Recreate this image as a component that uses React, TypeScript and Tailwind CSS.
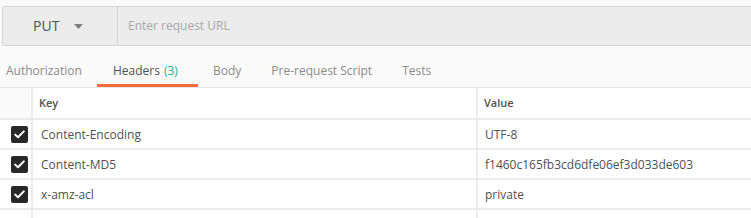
import React from "react";

const rows = [
  { key: "Content-Encoding", value: "UTF-8" },
  { key: "Content-MD5", value: "f1460c165fb3cd6dfe06ef3d033de603" },
  { key: "x-amz-acl", value: "private" },
];

function Check() {
  return (
    <div className="w-[17px] h-[17px] rounded-[2px] bg-[#282828] flex items-center justify-center">
      <svg width="11" height="9" viewBox="0 0 11 9" fill="none">
        <path d="M1.2 4.6 L4 7.3 L9.8 1.4" stroke="#fff" strokeWidth="2" strokeLinecap="round" strokeLinejoin="round" />
      </svg>
    </div>
  );
}

export default function App() {
  return (
    <div className="w-[751px] h-[218px] overflow-hidden bg-[#fafafa] text-[#505050]" style={{ fontFamily: '"Open Sans", sans-serif' }}>
      <div className="pt-[6px] pl-[2px]">
        <div className="flex h-[40px] w-[780px] bg-[#ececec] border border-[#d4d4d4] rounded-[3px]">
          <div className="w-[115px] flex items-center border-r border-[#d4d4d4] pl-[30px]">
            <span className="text-[14px] text-[#505050] leading-none">PUT</span>
            <svg className="ml-[15px]" width="9" height="5" viewBox="0 0 9 5">
              <path d="M0 0 L9 0 L4.5 5 Z" fill="#808080" />
            </svg>
          </div>
          <div className="flex items-center pl-[10px] text-[12px] text-[#a8a8a8]">Enter request URL</div>
        </div>
      </div>
      <div className="flex h-[42px] border-b border-[#e6e6e6] text-[12px]">
        <div className="pl-[6px] w-[97px] h-full flex items-center pt-[9px] text-[#8a8a8a]">Authorization</div>
        <div className="w-[101px] h-full flex items-center pl-[16px] border-b-[3px] border-[#f26b3a] pt-[11px] text-[#505050]">
          Headers<span className="ml-[4px] text-[#26b47f]">(3)</span>
        </div>
        <div className="ml-[15px] h-full flex items-center pt-[9px] text-[#8a8a8a]">Body</div>
        <div className="ml-[30px] h-full flex items-center pt-[9px] text-[#8a8a8a]">Pre-request Script</div>
        <div className="ml-[30px] h-full flex items-center pt-[9px] text-[#8a8a8a]">Tests</div>
      </div>
      <div className="bg-white">
        <div className="flex h-[32px] border-b-2 border-[#ebebeb]">
          <div className="w-[33px] border-r-2 border-[#ebebeb] bg-[#fafafa]" />
          <div className="w-[445px] border-r-2 border-[#ebebeb] flex items-center pl-[6px] text-[11px] font-semibold text-[#505050]">Key</div>
          <div className="flex-1 flex items-center pl-[6px] text-[11px] font-semibold text-[#505050]">Value</div>
        </div>
        {rows.map((r) => (
          <div key={r.key} className="flex h-[30px] border-b-2 border-[#ebebeb]">
            <div className="w-[33px] border-r-2 border-[#ebebeb] flex items-center pl-[11px]">
              <Check />
            </div>
            <div className="w-[445px] border-r-2 border-[#ebebeb] flex items-center pl-[8px] pt-[1px] text-[12px]">{r.key}</div>
            <div className="flex-1 flex items-center pl-[7px] pt-[1px] text-[12px]">{r.value}</div>
          </div>
        ))}
        <div className="flex h-[30px]">
          <div className="w-[33px] border-r-2 border-[#ebebeb]" />
          <div className="w-[445px] border-r-2 border-[#ebebeb]" />
          <div className="flex-1" />
        </div>
      </div>
    </div>
  );
}
